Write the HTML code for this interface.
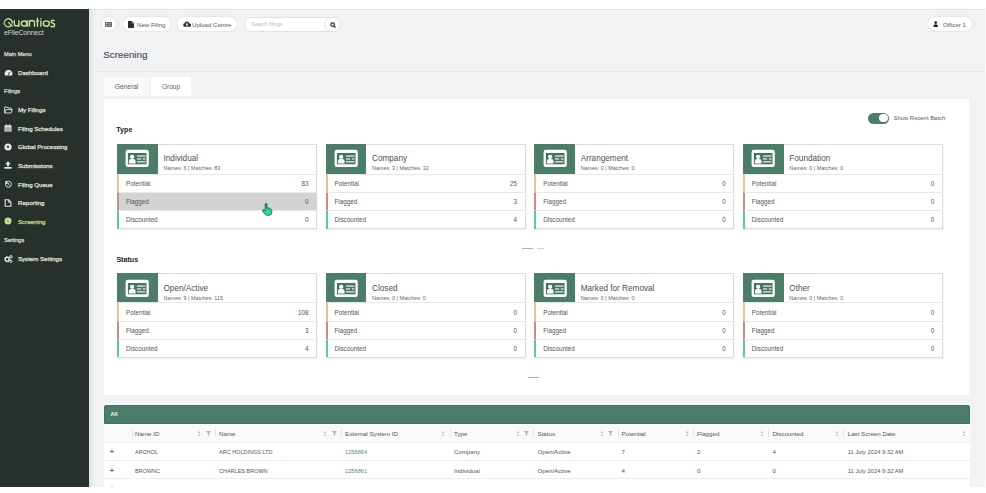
<!DOCTYPE html>
<html><head><meta charset="utf-8"><style>
*{margin:0;padding:0;box-sizing:border-box}
html,body{width:986px;height:493px;overflow:hidden;background:#fff;font-family:"Liberation Sans",sans-serif}
.abs{position:absolute}
#side{position:absolute;left:0;top:9px;width:89px;height:477.5px;background:#27302a;z-index:2}
#logo{position:absolute;left:4px;top:7.6px;font-size:12.6px;color:#cfdda4;letter-spacing:-0.1px;line-height:1;-webkit-text-stroke:0.35px #cfdda4}
#logo2{position:absolute;left:4px;top:20.2px;font-size:7px;letter-spacing:-0.15px;color:#d0d4d0;line-height:1}
.sh{position:absolute;left:4px;font-size:5.6px;font-weight:normal;-webkit-text-stroke:0.25px #dcdcd4;color:#dcdcd4;line-height:7px;white-space:nowrap}
.si{position:absolute;left:18px;font-size:6.1px;font-weight:normal;-webkit-text-stroke:0.25px #e2e2dc;color:#e2e2dc;line-height:8px;white-space:nowrap}
.si.act{color:#c8de8e;-webkit-text-stroke:0.25px #c8de8e}
.sic{position:absolute;left:-14.8px;top:-0.6px;width:10px;height:8px;display:flex;align-items:center;justify-content:center}
#main{position:absolute;left:89px;top:9px;width:896px;height:477.5px;background:#f0f2f3}
#topline{position:absolute;left:89px;top:9px;width:896px;height:1px;background:#dfe2e2}
.pill{position:absolute;background:#fff;border-radius:8px;box-shadow:0 0 2px rgba(0,0,0,0.16);font-size:6.1px;color:#5a5a5a;line-height:15px;white-space:nowrap}
#hdrline{position:absolute;left:89px;top:71px;width:896px;height:1px;background:#e5e8e8}
#title{position:absolute;left:103.3px;top:49px;font-size:9.8px;color:#4c5256;-webkit-text-stroke:0.15px #4c5256;line-height:12px}
.tab{position:absolute;top:76.7px;height:19.5px;font-size:6.6px;line-height:20.5px;text-align:center}
#panel{position:absolute;left:104px;top:98.5px;width:865px;height:296.5px;background:#fff}
.lbl{position:absolute;font-size:7.1px;font-weight:bold;color:#222;line-height:9px}
.card{position:absolute;width:200px;height:85.3px;background:#fff;border:1px solid #dadddd;box-shadow:0.5px 1px 1.5px rgba(0,0,0,0.09)}
.cib{position:absolute;left:-1px;top:-1px;width:40.8px;height:30px;background:#4b7d68}
.ic{position:absolute;left:8.4px;top:5.6px}
.ct{position:absolute;left:45.5px;top:9.5px;font-size:8.2px;color:#4a4f52;line-height:10px;white-space:nowrap}
.cs{position:absolute;left:45.5px;top:20.5px;font-size:5.4px;color:#666;line-height:6px;white-space:nowrap}
.row{position:absolute;left:-1px;width:200px;height:18.35px;border-top:1px solid #e6e9e9;border-left:2px solid #e6c690}
.row.f{border-left-color:#d68484}
.row.d{border-left-color:#5ac9a0}
.row.hov{background:#d2d3d3}
.rl{position:absolute;left:7px;top:0.3px;line-height:17.5px;font-size:6.3px;color:#555}
.rv{position:absolute;right:8.5px;top:0.3px;line-height:17.5px;font-size:6.3px;color:#555}
.dot{position:absolute;height:1.6px}
#tbl{position:absolute;left:104px;top:403px;width:865.5px;height:83.5px;background:#fff}
#tgreen{position:absolute;left:104px;top:405px;width:865.5px;height:19px;background:#4b7d68;border:1px solid #41725d;border-radius:2px 2px 0 0;color:#f4f4f4;font-size:5.6px;font-weight:bold;line-height:17px;padding-left:5.5px}
#thead{position:absolute;left:104px;top:424.5px;width:865.5px;height:18.3px;background:#f9f9f9;border-bottom:1px solid #ebeded}
.th,.srt,.flt,.sep,.td,.plus{position:absolute}
.th{top:0.2px;line-height:18px;font-size:6.2px;color:#555;white-space:nowrap}
.srt{top:6.3px;line-height:0;opacity:0.85}
.srt svg,.flt svg,.sic svg{display:block}
.flt{top:6.5px;line-height:0;opacity:0.75}
.sep{top:4.5px;width:1px;height:8px;background:#e4e6e6}
#theadin{position:absolute;left:-104px;top:0}
.tr{position:absolute;left:104px;width:865.5px;height:18.2px;border-bottom:1px solid #eceeee}
.trin{position:absolute;left:-104px;top:0}
.td{top:0.7px;line-height:18px;font-size:5.6px;color:#555;white-space:nowrap}
.td.lnk{color:#4f8a78}
.plus{left:6px;top:0.5px;line-height:18px;font-size:6.5px;color:#555;font-weight:bold}
</style></head><body>
<div id="side">
<svg style="position:absolute;left:0;top:5px" width="60" height="16" viewBox="0 14 60 16"><defs><linearGradient id="lq" x1="0" y1="0" x2="1" y2="0"><stop offset="0" stop-color="#a3b27f"/><stop offset="1" stop-color="#cfdca2"/></linearGradient></defs><g fill="none" stroke-width="1.45" stroke-linecap="butt"><path d="M11.6 25.2 A4.05 4.05 0 1 1 12.3 23.4" stroke="url(#lq)"/><path d="M8.3 22.3 L12.6 26.6" stroke="#c4d298"/><g stroke="#cddba2"><path d="M14.3 20.2 V23.8 A2.3 2.3 0 0 0 18.9 23.8 M18.9 20.2 V26.8"/><ellipse cx="24.1" cy="23.5" rx="2.75" ry="2.6"/><path d="M27.2 20.2 V26.8"/><path d="M29.4 26.8 V20.2 M29.4 23.1 A2.55 2.55 0 0 1 34.5 23.1 V26.8"/><path d="M37.5 17.7 V26.8 M36.1 20.9 H38.9"/><path d="M40.9 20.6 V26.8"/><ellipse cx="46.3" cy="23.5" rx="3.0" ry="2.65"/><path d="M54.5 21.1 Q53.9 20.2 52.7 20.2 Q51.1 20.2 51.1 21.6 Q51.1 22.9 52.8 23.3 Q54.6 23.8 54.6 25.2 Q54.6 26.8 52.7 26.8 Q51.2 26.8 50.6 25.9"/></g></g><circle cx="40.9" cy="18.7" r="0.8" fill="#cddba2"/></svg>
<div id="logo2">eFileConnect</div>
<div style="position:absolute;left:0;top:-9px"><div class="sh" style="top:50.7px">Main Menu</div><div class="si" style="top:68.8px"><span class="sic"><svg width="9" height="7" viewBox="0 0 9 7"><path d="M1.1 6.6 A3.9 3.9 0 1 1 7.9 6.6 Z" fill="#e6e6e6"/><path d="M4.5 6 L5.5 3" stroke="#27302a" stroke-width="0.9"/></svg></span>Dashboard</div><div class="sh" style="top:88.0px">Filings</div><div class="si" style="top:106.1px"><span class="sic"><svg width="9" height="8" viewBox="0 0 9 8"><path d="M0.6 7 V1 H3.2 L4 2 H7.2 V3.4 M0.6 7 L2 3.6 H8.4 L7 7 Z" fill="none" stroke="#e6e6e6" stroke-width="0.9"/></svg></span>My Filings</div><div class="si" style="top:124.8px"><span class="sic"><svg width="8" height="8" viewBox="0 0 8 8"><rect x="0.5" y="1.3" width="7" height="6.2" fill="#e6e6e6"/><rect x="1.8" y="0.2" width="0.9" height="1.6" fill="#e6e6e6"/><rect x="5.3" y="0.2" width="0.9" height="1.6" fill="#e6e6e6"/><rect x="1.3" y="3.2" width="5.4" height="3.5" fill="#aaa"/></svg></span>Filing Schedules</div><div class="si" style="top:143.4px"><span class="sic"><svg width="8" height="8" viewBox="0 0 8 8"><circle cx="4" cy="4" r="3.6" fill="#e6e6e6"/><path d="M2.5 2.5 Q4 3.6 5 2.4 Q5.4 4.2 4 5.5 Q3 4.4 2.5 2.5Z" fill="#27302a"/></svg></span>Global Processing</div><div class="si" style="top:162.0px"><span class="sic"><svg width="8" height="8" viewBox="0 0 8 8"><path d="M4 0.3 L7 3.3 H5 V5.2 H3 V3.3 H1 Z" fill="#e6e6e6"/><rect x="0.4" y="6" width="7.2" height="1.7" fill="#e6e6e6"/></svg></span>Submissions</div><div class="si" style="top:180.7px"><span class="sic"><svg width="8" height="8" viewBox="0 0 8 8"><circle cx="4.4" cy="4.2" r="3" fill="none" stroke="#e6e6e6" stroke-width="0.9"/><path d="M1 2.5 L2.6 1 L3.4 4 Z M4.4 2.8 V4.4 L5.6 5" fill="none" stroke="#e6e6e6" stroke-width="0.9"/></svg></span>Filing Queue</div><div class="si" style="top:199.3px"><span class="sic"><svg width="8" height="8" viewBox="0 0 8 8"><path d="M1.2 0.8 H4.6 L6.9 3.1 V7.3 H1.2 Z" fill="none" stroke="#e6e6e6" stroke-width="1.1"/><path d="M4.4 0.8 V3.3 H6.9" fill="none" stroke="#e6e6e6" stroke-width="0.8"/></svg></span>Reporting</div><div class="si act" style="top:218.0px"><span class="sic"><svg width="8" height="8" viewBox="0 0 8 8"><circle cx="4" cy="4" r="3.5" fill="#c8de8e"/><path d="M3.6 2.2 L4.4 2.2 L4.2 4.6 L5.4 5.4 L3.4 5 Z" fill="#7f8f55"/></svg></span>Screening</div><div class="sh" style="top:237.1px">Settings</div><div class="si" style="top:255.2px"><span class="sic"><svg width="9" height="8" viewBox="0 0 9 8"><circle cx="3.2" cy="4.3" r="2.3" fill="none" stroke="#e6e6e6" stroke-width="1.6" stroke-dasharray="1.2 0.6"/><circle cx="3.2" cy="4.3" r="1.9" fill="none" stroke="#e6e6e6" stroke-width="1.1"/><circle cx="7" cy="1.8" r="1.2" fill="none" stroke="#e6e6e6" stroke-width="1"/><circle cx="7" cy="6.4" r="1.1" fill="none" stroke="#e6e6e6" stroke-width="0.9"/></svg></span>System Settings</div></div>
</div>
<div id="main"></div><div class="abs" style="left:89px;top:10px;width:6px;height:476.5px;background:linear-gradient(to right,#dce2e2 0,#e3e7e7 2.5px,#eaecec 3.5px,#f0f2f3 6px)"></div>
<div id="topline"></div>
<div class="pill" style="left:101.5px;top:17px;width:14px;height:14px;border-radius:7px"><svg style="position:absolute;left:3.6px;top:4.6px" width="7" height="5" viewBox="0 0 7 5"><rect x="0" y="0" width="7" height="5" fill="#6a6a6a"/><rect x="1" y="0.9" width="1" height="1" fill="#ddd"/><rect x="1" y="3" width="1" height="1" fill="#ddd"/><rect x="2.8" y="0.9" width="3.2" height="1" fill="#999"/><rect x="2.8" y="3" width="3.2" height="1" fill="#999"/></svg></div>
<div class="pill" style="left:122.5px;top:17px;width:48.5px;height:14px"><svg style="position:absolute;left:5.8px;top:3.6px" width="6" height="7" viewBox="0 0 6 7"><path d="M0 0 H3.8 L6 2.2 V7 H0 Z" fill="#2a2f2c"/><path d="M3.6 0 V2.4 H6" fill="#888"/></svg><span style="position:absolute;left:14.5px;top:0">New Filing</span></div>
<div class="pill" style="left:177px;top:17px;width:60px;height:14px"><svg style="position:absolute;left:5.8px;top:4px" width="8" height="6" viewBox="0 0 8 6"><path d="M1.8 5.8 A1.8 1.8 0 0 1 1.5 2.3 A2.6 2.6 0 0 1 6.4 2.4 A1.7 1.7 0 0 1 6.3 5.8 Z" fill="#2a2f2c"/><path d="M4 2 L5.4 3.5 H4.6 V5 H3.4 V3.5 H2.6 Z" fill="#fff"/></svg><span style="position:absolute;left:15px;top:0">Upload Centre</span></div>
<div class="pill" style="left:243.8px;top:16.5px;width:97.5px;height:15.3px;border:1px solid #dfe2e2;box-shadow:none"><span style="position:absolute;left:6.5px;top:0;font-size:5.2px;color:#bbb;line-height:13.5px">Search filings</span><div style="position:absolute;right:-1px;top:-1px;width:17.5px;height:15.3px;border-radius:8px;border:1px solid #e2e4e4;background:#fff"><svg style="position:absolute;left:5px;top:4px" width="6" height="6" viewBox="0 0 6 6"><circle cx="2.6" cy="2.6" r="1.8" fill="none" stroke="#2a2f2c" stroke-width="1.2"/><path d="M3.9 3.9 L5.5 5.5" stroke="#2a2f2c" stroke-width="1.3"/></svg></div></div>
<div class="pill" style="left:928px;top:17.3px;width:44px;height:14px"><svg style="position:absolute;left:5.2px;top:3.8px" width="6" height="7" viewBox="0 0 6 7"><circle cx="2.7" cy="1.6" r="1.4" fill="#222"/><path d="M0.4 6 C0.4 3.9 1.3 3.3 2.7 3.3 C4.1 3.3 5 3.9 5 6 Z" fill="#222"/></svg><span style="position:absolute;left:15px;top:0">Officer 1</span></div>
<div id="title">Screening</div>
<div id="hdrline"></div>
<div class="tab" style="left:104.3px;width:44.5px;background:#f8f9f9;color:#666">General</div>
<div class="tab" style="left:150.8px;width:40.5px;background:#fff;color:#4f7263">Group</div>
<div id="panel"></div>
<div class="abs" style="left:868px;top:112.6px;width:21px;height:11.2px;border-radius:6px;background:#4b7d68"><div style="position:absolute;right:1.3px;top:1.3px;width:8.6px;height:8.6px;border-radius:50%;background:#fff"></div></div>
<div class="abs" style="left:893.5px;top:114px;font-size:5.9px;color:#5a5a5a;line-height:8px;white-space:nowrap">Show Recent Batch</div>
<div class="lbl" style="left:116.3px;top:126px">Type</div>
<div class="card" style="left:117px;top:143.5px;height:85.25px"><div class="cib" style="height:30px"><svg class="ic" width="25" height="19" viewBox="0 0 25 19"><rect x="0.6" y="0.8" width="23.2" height="17.2" rx="2.3" fill="#fff"/><rect x="2.9" y="4.0" width="18.6" height="11.3" fill="#447460"/><circle cx="7.15" cy="7.8" r="2.15" fill="#fff"/><path d="M3.9 14.4 V12.3 Q3.9 9.9 6.2 9.9 H8.3 Q10.6 9.9 10.6 12.3 V14.4 Z" fill="#fff"/><rect x="12" y="6.5" width="8.5" height="1.1" fill="#fff"/><rect x="12" y="9.4" width="4.2" height="1.1" fill="#fff"/><rect x="17.8" y="9.4" width="2.7" height="1.1" fill="#fff"/><rect x="12" y="12.3" width="8.5" height="1.1" fill="#fff"/></svg></div><div class="ct">Individual</div><div class="cs">Names: 6 | Matches: 83</div><div class="row p" style="top:29.00px"><span class="rl">Potential</span><span class="rv">83</span></div><div class="row f hov" style="top:47.35px"><span class="rl">Flagged</span><span class="rv">0</span></div><div class="row d" style="top:65.70px"><span class="rl">Discounted</span><span class="rv">0</span></div></div><div class="card" style="left:325.5px;top:143.5px;height:85.25px"><div class="cib" style="height:30px"><svg class="ic" width="25" height="19" viewBox="0 0 25 19"><rect x="0.6" y="0.8" width="23.2" height="17.2" rx="2.3" fill="#fff"/><rect x="2.9" y="4.0" width="18.6" height="11.3" fill="#447460"/><circle cx="7.15" cy="7.8" r="2.15" fill="#fff"/><path d="M3.9 14.4 V12.3 Q3.9 9.9 6.2 9.9 H8.3 Q10.6 9.9 10.6 12.3 V14.4 Z" fill="#fff"/><rect x="12" y="6.5" width="8.5" height="1.1" fill="#fff"/><rect x="12" y="9.4" width="4.2" height="1.1" fill="#fff"/><rect x="17.8" y="9.4" width="2.7" height="1.1" fill="#fff"/><rect x="12" y="12.3" width="8.5" height="1.1" fill="#fff"/></svg></div><div class="ct">Company</div><div class="cs">Names: 3 | Matches: 32</div><div class="row p" style="top:29.00px"><span class="rl">Potential</span><span class="rv">25</span></div><div class="row f" style="top:47.35px"><span class="rl">Flagged</span><span class="rv">3</span></div><div class="row d" style="top:65.70px"><span class="rl">Discounted</span><span class="rv">4</span></div></div><div class="card" style="left:534.2px;top:143.5px;height:85.25px"><div class="cib" style="height:30px"><svg class="ic" width="25" height="19" viewBox="0 0 25 19"><rect x="0.6" y="0.8" width="23.2" height="17.2" rx="2.3" fill="#fff"/><rect x="2.9" y="4.0" width="18.6" height="11.3" fill="#447460"/><circle cx="7.15" cy="7.8" r="2.15" fill="#fff"/><path d="M3.9 14.4 V12.3 Q3.9 9.9 6.2 9.9 H8.3 Q10.6 9.9 10.6 12.3 V14.4 Z" fill="#fff"/><rect x="12" y="6.5" width="8.5" height="1.1" fill="#fff"/><rect x="12" y="9.4" width="4.2" height="1.1" fill="#fff"/><rect x="17.8" y="9.4" width="2.7" height="1.1" fill="#fff"/><rect x="12" y="12.3" width="8.5" height="1.1" fill="#fff"/></svg></div><div class="ct">Arrangement</div><div class="cs">Names: 0 | Matches: 0</div><div class="row p" style="top:29.00px"><span class="rl">Potential</span><span class="rv">0</span></div><div class="row f" style="top:47.35px"><span class="rl">Flagged</span><span class="rv">0</span></div><div class="row d" style="top:65.70px"><span class="rl">Discounted</span><span class="rv">0</span></div></div><div class="card" style="left:742.8px;top:143.5px;height:85.25px"><div class="cib" style="height:30px"><svg class="ic" width="25" height="19" viewBox="0 0 25 19"><rect x="0.6" y="0.8" width="23.2" height="17.2" rx="2.3" fill="#fff"/><rect x="2.9" y="4.0" width="18.6" height="11.3" fill="#447460"/><circle cx="7.15" cy="7.8" r="2.15" fill="#fff"/><path d="M3.9 14.4 V12.3 Q3.9 9.9 6.2 9.9 H8.3 Q10.6 9.9 10.6 12.3 V14.4 Z" fill="#fff"/><rect x="12" y="6.5" width="8.5" height="1.1" fill="#fff"/><rect x="12" y="9.4" width="4.2" height="1.1" fill="#fff"/><rect x="17.8" y="9.4" width="2.7" height="1.1" fill="#fff"/><rect x="12" y="12.3" width="8.5" height="1.1" fill="#fff"/></svg></div><div class="ct">Foundation</div><div class="cs">Names: 0 | Matches: 0</div><div class="row p" style="top:29.00px"><span class="rl">Potential</span><span class="rv">0</span></div><div class="row f" style="top:47.35px"><span class="rl">Flagged</span><span class="rv">0</span></div><div class="row d" style="top:65.70px"><span class="rl">Discounted</span><span class="rv">0</span></div></div>
<div class="dot" style="left:522px;top:247.6px;width:11px;background:#a3be80"></div>
<div class="dot" style="left:537px;top:247.6px;width:7px;background:#d3d3d3"></div>
<div class="lbl" style="left:116.4px;top:255.5px">Status</div>
<div class="card" style="left:117px;top:273.3px;height:84.25px"><div class="cib" style="height:29px"><svg class="ic" width="25" height="19" viewBox="0 0 25 19"><rect x="0.6" y="0.8" width="23.2" height="17.2" rx="2.3" fill="#fff"/><rect x="2.9" y="4.0" width="18.6" height="11.3" fill="#447460"/><circle cx="7.15" cy="7.8" r="2.15" fill="#fff"/><path d="M3.9 14.4 V12.3 Q3.9 9.9 6.2 9.9 H8.3 Q10.6 9.9 10.6 12.3 V14.4 Z" fill="#fff"/><rect x="12" y="6.5" width="8.5" height="1.1" fill="#fff"/><rect x="12" y="9.4" width="4.2" height="1.1" fill="#fff"/><rect x="17.8" y="9.4" width="2.7" height="1.1" fill="#fff"/><rect x="12" y="12.3" width="8.5" height="1.1" fill="#fff"/></svg></div><div class="ct">Open/Active</div><div class="cs">Names: 9 | Matches: 115</div><div class="row p" style="top:28.00px"><span class="rl">Potential</span><span class="rv">108</span></div><div class="row f" style="top:46.35px"><span class="rl">Flagged</span><span class="rv">3</span></div><div class="row d" style="top:64.70px"><span class="rl">Discounted</span><span class="rv">4</span></div></div><div class="card" style="left:325.5px;top:273.3px;height:84.25px"><div class="cib" style="height:29px"><svg class="ic" width="25" height="19" viewBox="0 0 25 19"><rect x="0.6" y="0.8" width="23.2" height="17.2" rx="2.3" fill="#fff"/><rect x="2.9" y="4.0" width="18.6" height="11.3" fill="#447460"/><circle cx="7.15" cy="7.8" r="2.15" fill="#fff"/><path d="M3.9 14.4 V12.3 Q3.9 9.9 6.2 9.9 H8.3 Q10.6 9.9 10.6 12.3 V14.4 Z" fill="#fff"/><rect x="12" y="6.5" width="8.5" height="1.1" fill="#fff"/><rect x="12" y="9.4" width="4.2" height="1.1" fill="#fff"/><rect x="17.8" y="9.4" width="2.7" height="1.1" fill="#fff"/><rect x="12" y="12.3" width="8.5" height="1.1" fill="#fff"/></svg></div><div class="ct">Closed</div><div class="cs">Names: 0 | Matches: 0</div><div class="row p" style="top:28.00px"><span class="rl">Potential</span><span class="rv">0</span></div><div class="row f" style="top:46.35px"><span class="rl">Flagged</span><span class="rv">0</span></div><div class="row d" style="top:64.70px"><span class="rl">Discounted</span><span class="rv">0</span></div></div><div class="card" style="left:534.2px;top:273.3px;height:84.25px"><div class="cib" style="height:29px"><svg class="ic" width="25" height="19" viewBox="0 0 25 19"><rect x="0.6" y="0.8" width="23.2" height="17.2" rx="2.3" fill="#fff"/><rect x="2.9" y="4.0" width="18.6" height="11.3" fill="#447460"/><circle cx="7.15" cy="7.8" r="2.15" fill="#fff"/><path d="M3.9 14.4 V12.3 Q3.9 9.9 6.2 9.9 H8.3 Q10.6 9.9 10.6 12.3 V14.4 Z" fill="#fff"/><rect x="12" y="6.5" width="8.5" height="1.1" fill="#fff"/><rect x="12" y="9.4" width="4.2" height="1.1" fill="#fff"/><rect x="17.8" y="9.4" width="2.7" height="1.1" fill="#fff"/><rect x="12" y="12.3" width="8.5" height="1.1" fill="#fff"/></svg></div><div class="ct">Marked for Removal</div><div class="cs">Names: 0 | Matches: 0</div><div class="row p" style="top:28.00px"><span class="rl">Potential</span><span class="rv">0</span></div><div class="row f" style="top:46.35px"><span class="rl">Flagged</span><span class="rv">0</span></div><div class="row d" style="top:64.70px"><span class="rl">Discounted</span><span class="rv">0</span></div></div><div class="card" style="left:742.8px;top:273.3px;height:84.25px"><div class="cib" style="height:29px"><svg class="ic" width="25" height="19" viewBox="0 0 25 19"><rect x="0.6" y="0.8" width="23.2" height="17.2" rx="2.3" fill="#fff"/><rect x="2.9" y="4.0" width="18.6" height="11.3" fill="#447460"/><circle cx="7.15" cy="7.8" r="2.15" fill="#fff"/><path d="M3.9 14.4 V12.3 Q3.9 9.9 6.2 9.9 H8.3 Q10.6 9.9 10.6 12.3 V14.4 Z" fill="#fff"/><rect x="12" y="6.5" width="8.5" height="1.1" fill="#fff"/><rect x="12" y="9.4" width="4.2" height="1.1" fill="#fff"/><rect x="17.8" y="9.4" width="2.7" height="1.1" fill="#fff"/><rect x="12" y="12.3" width="8.5" height="1.1" fill="#fff"/></svg></div><div class="ct">Other</div><div class="cs">Names: 0 | Matches: 0</div><div class="row p" style="top:28.00px"><span class="rl">Potential</span><span class="rv">0</span></div><div class="row f" style="top:46.35px"><span class="rl">Flagged</span><span class="rv">0</span></div><div class="row d" style="top:64.70px"><span class="rl">Discounted</span><span class="rv">0</span></div></div>
<div class="dot" style="left:527.5px;top:376.5px;width:11.5px;background:#a3be80"></div>
<svg class="abs" style="left:261.5px;top:203.2px" width="11" height="13" viewBox="0 0 11 13"><defs><linearGradient id="cg" x1="0" y1="0" x2="0" y2="1"><stop offset="0" stop-color="#17a66b"/><stop offset="0.6" stop-color="#25d590"/><stop offset="1" stop-color="#33e6a0"/></linearGradient></defs><path d="M3.2 1.2 Q3.2 0.4 4.1 0.4 Q5 0.4 5 1.2 V4.8 Q6.2 4.5 6.8 5.2 Q8 5 8.5 6 Q9.8 6 9.8 7.5 V9.2 Q9.8 12 7 12.3 H5.2 Q3.7 12.3 2.7 10.9 L0.6 7.9 Q0.2 7.1 1 6.7 Q1.9 6.4 3.2 7.8 Z" fill="url(#cg)" stroke="#0d5c3c" stroke-width="0.8"/></svg>
<div id="tbl"></div>
<div id="tgreen">All</div>
<div id="thead"><div id="theadin"><span class="th" style="left:135px">Name ID</span><span class="srt" style="left:197.3px"><svg width="4" height="6" viewBox="0 0 4 6"><path d="M0.6 1.8 L2 0.3 L3.4 1.8 Z M0.6 3.4 L2 4.9 L3.4 3.4 Z" fill="#9a9a9a"/></svg></span><span class="flt" style="left:206.2px"><svg width="5" height="5" viewBox="0 0 5 5"><path d="M0 0 H5 L3.1 2.4 V4.7 L1.9 4.7 V2.4 Z" fill="#9a9a9a"/></svg></span><span class="sep" style="left:214.5px"></span><span class="th" style="left:219px">Name</span><span class="srt" style="left:323.4px"><svg width="4" height="6" viewBox="0 0 4 6"><path d="M0.6 1.8 L2 0.3 L3.4 1.8 Z M0.6 3.4 L2 4.9 L3.4 3.4 Z" fill="#9a9a9a"/></svg></span><span class="flt" style="left:331.7px"><svg width="5" height="5" viewBox="0 0 5 5"><path d="M0 0 H5 L3.1 2.4 V4.7 L1.9 4.7 V2.4 Z" fill="#9a9a9a"/></svg></span><span class="sep" style="left:340.6px"></span><span class="th" style="left:345px">External System ID</span><span class="srt" style="left:441.3px"><svg width="4" height="6" viewBox="0 0 4 6"><path d="M0.6 1.8 L2 0.3 L3.4 1.8 Z M0.6 3.4 L2 4.9 L3.4 3.4 Z" fill="#9a9a9a"/></svg></span><span class="sep" style="left:449.6px"></span><span class="th" style="left:454px">Type</span><span class="srt" style="left:515.6px"><svg width="4" height="6" viewBox="0 0 4 6"><path d="M0.6 1.8 L2 0.3 L3.4 1.8 Z M0.6 3.4 L2 4.9 L3.4 3.4 Z" fill="#9a9a9a"/></svg></span><span class="flt" style="left:524.1px"><svg width="5" height="5" viewBox="0 0 5 5"><path d="M0 0 H5 L3.1 2.4 V4.7 L1.9 4.7 V2.4 Z" fill="#9a9a9a"/></svg></span><span class="sep" style="left:533.2px"></span><span class="th" style="left:537.5px">Status</span><span class="srt" style="left:599.6px"><svg width="4" height="6" viewBox="0 0 4 6"><path d="M0.6 1.8 L2 0.3 L3.4 1.8 Z M0.6 3.4 L2 4.9 L3.4 3.4 Z" fill="#9a9a9a"/></svg></span><span class="flt" style="left:608.2px"><svg width="5" height="5" viewBox="0 0 5 5"><path d="M0 0 H5 L3.1 2.4 V4.7 L1.9 4.7 V2.4 Z" fill="#9a9a9a"/></svg></span><span class="sep" style="left:617.5px"></span><span class="th" style="left:621.6px">Potential</span><span class="srt" style="left:684.8px"><svg width="4" height="6" viewBox="0 0 4 6"><path d="M0.6 1.8 L2 0.3 L3.4 1.8 Z M0.6 3.4 L2 4.9 L3.4 3.4 Z" fill="#9a9a9a"/></svg></span><span class="sep" style="left:693.4px"></span><span class="th" style="left:697px">Flagged</span><span class="srt" style="left:760px"><svg width="4" height="6" viewBox="0 0 4 6"><path d="M0.6 1.8 L2 0.3 L3.4 1.8 Z M0.6 3.4 L2 4.9 L3.4 3.4 Z" fill="#9a9a9a"/></svg></span><span class="sep" style="left:768px"></span><span class="th" style="left:772.4px">Discounted</span><span class="srt" style="left:835.2px"><svg width="4" height="6" viewBox="0 0 4 6"><path d="M0.6 1.8 L2 0.3 L3.4 1.8 Z M0.6 3.4 L2 4.9 L3.4 3.4 Z" fill="#9a9a9a"/></svg></span><span class="sep" style="left:843px"></span><span class="th" style="left:847.7px">Last Screen Date</span><span class="srt" style="left:961.7px"><svg width="4" height="6" viewBox="0 0 4 6"><path d="M0.6 1.8 L2 0.3 L3.4 1.8 Z M0.6 3.4 L2 4.9 L3.4 3.4 Z" fill="#9a9a9a"/></svg></span><span class="sep" style="left:131.5px"></span></div></div>
<div class="tr" style="top:442.8px"><div class="trin"><span class="plus" style="left:110px">+</span><span class="td" style="left:135px;font-size:5.5px">ARCHOL</span><span class="td" style="left:219px;font-size:5.5px">ARC HOLDINGS LTD</span><span class="td lnk" style="left:345px;font-size:5.7px">1256864</span><span class="td" style="left:454px;font-size:6.1px">Company</span><span class="td" style="left:537.5px;font-size:6.1px">Open/Active</span><span class="td" style="left:621.6px;font-size:6.1px">7</span><span class="td" style="left:697px;font-size:6.1px">2</span><span class="td" style="left:772.4px;font-size:6.1px">4</span><span class="td" style="left:847.7px;font-size:5.85px">11 July 2024 9:32 AM</span></div></div><div class="tr" style="top:461.0px"><div class="trin"><span class="plus" style="left:110px">+</span><span class="td" style="left:135px;font-size:5.5px">BROWNC</span><span class="td" style="left:219px;font-size:5.5px">CHARLES BROWN</span><span class="td lnk" style="left:345px;font-size:5.7px">1256861</span><span class="td" style="left:454px;font-size:6.1px">Individual</span><span class="td" style="left:537.5px;font-size:6.1px">Open/Active</span><span class="td" style="left:621.6px;font-size:6.1px">4</span><span class="td" style="left:697px;font-size:6.1px">0</span><span class="td" style="left:772.4px;font-size:6.1px">0</span><span class="td" style="left:847.7px;font-size:5.85px">11 July 2024 9:32 AM</span></div></div><div class="tr" style="top:479.2px"><div class="trin"><span class="plus" style="left:110px">+</span><span class="td" style="left:135px;font-size:5.5px">DUNCED</span><span class="td" style="left:219px;font-size:5.5px">PELICAN DUNE</span><span class="td lnk" style="left:345px;font-size:5.7px">1256855</span><span class="td" style="left:454px;font-size:6.1px">Individual</span><span class="td" style="left:537.5px;font-size:6.1px">Open/Active</span><span class="td" style="left:621.6px;font-size:6.1px">2</span><span class="td" style="left:697px;font-size:6.1px">1</span><span class="td" style="left:772.4px;font-size:6.1px">0</span><span class="td" style="left:847.7px;font-size:5.85px">11 July 2024 9:32 AM</span></div></div>
<div class="abs" style="left:0;top:486.6px;width:986px;height:7px;background:#fff;z-index:5"></div>
</body></html>
